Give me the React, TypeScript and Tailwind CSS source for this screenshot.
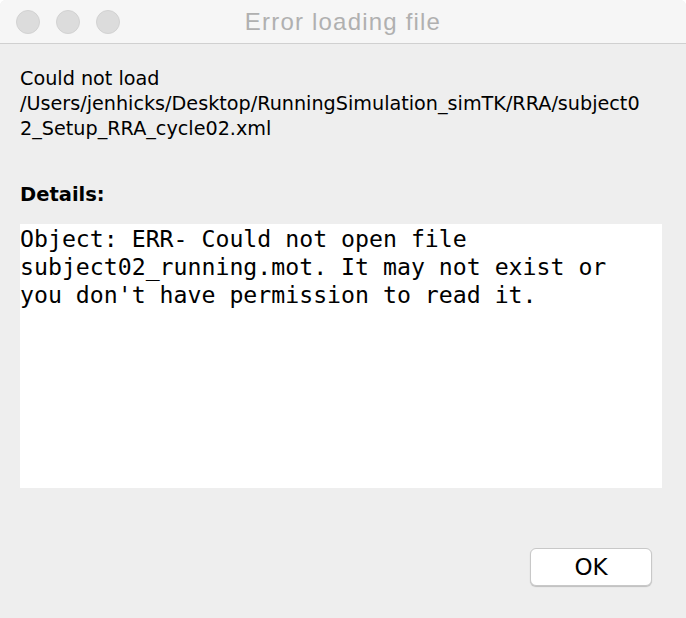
import React from "react";

export default function App() {
  return (
    <div className="w-[686px] h-[618px] bg-white">
      <div className="w-full h-full rounded-t-[6px] overflow-hidden bg-[#eeeeee] flex flex-col">
        <div className="h-[44px] bg-[#f6f6f6] border-b border-[#d0d0d0] relative flex items-center justify-center">
          <div className="absolute left-[16px] top-[10px] flex gap-[16px]">
            <div className="w-[24px] h-[24px] rounded-full bg-[#dcdcdc] border border-[#d2d2d2]" />
            <div className="w-[24px] h-[24px] rounded-full bg-[#dcdcdc] border border-[#d2d2d2]" />
            <div className="w-[24px] h-[24px] rounded-full bg-[#dcdcdc] border border-[#d2d2d2]" />
          </div>
          <div className="text-[24px] tracking-[1.2px] text-[#b0b0b0] [font-family:'Liberation_Sans',Arial,sans-serif] pt-[1px]">
            Error loading file
          </div>
        </div>
        <div className="flex-1 flex flex-col px-[20px] pt-[22px] [font-family:'DejaVu_Sans',sans-serif] text-black">
          <div className="text-[19.2px] leading-[25px] break-all">
            <div>Could not load</div>
            <div>/Users/jenhicks/Desktop/RunningSimulation_simTK/RRA/subject0</div>
            <div>2_Setup_RRA_cycle02.xml</div>
          </div>
          <div className="mt-[41px] text-[19.5px] font-bold leading-[25px]">Details:</div>
          <div className="mt-[17px] mr-[4px] h-[264px] bg-white [font-family:'DejaVu_Sans_Mono',monospace] text-[23.2px] leading-[28px] pt-[1px]">
            <div>Object: ERR- Could not open file</div>
            <div>subject02_running.mot. It may not exist or</div>
            <div>you don't have permission to read it.</div>
          </div>
          <div className="flex justify-end mt-[60px] mr-[14px]">
            <button className="w-[122px] h-[38px] bg-white rounded-[6px] border border-[#c8c8c8] shadow-[0_1px_1px_rgba(0,0,0,0.2)] text-[23px] [font-family:'DejaVu_Sans',sans-serif] text-black flex items-center justify-center">
              OK
            </button>
          </div>
        </div>
      </div>
    </div>
  );
}
